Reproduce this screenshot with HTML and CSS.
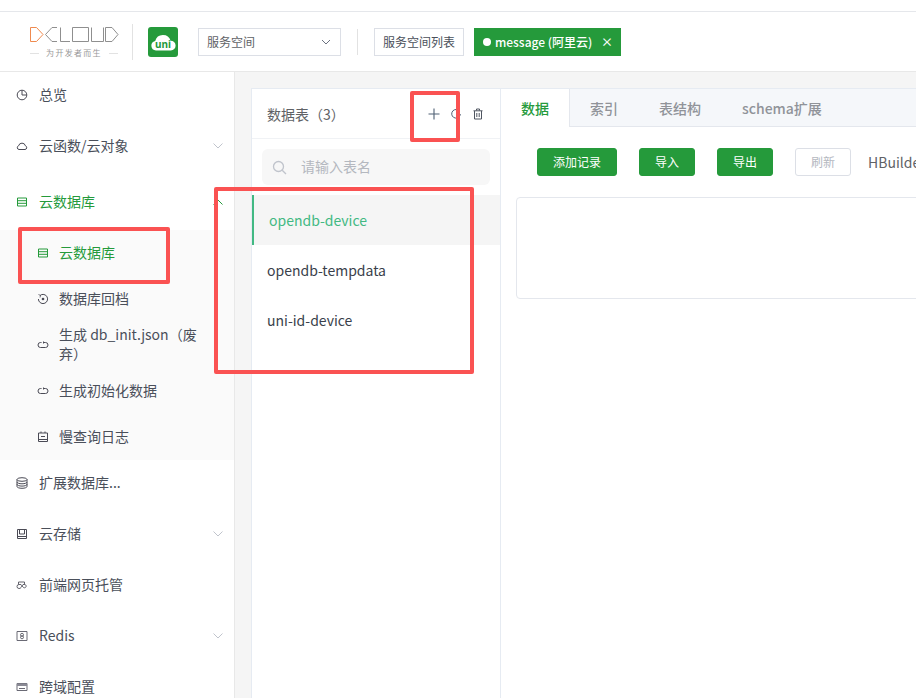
FILE: index.html
```html
<!DOCTYPE html>
<html lang="zh-CN">
<head>
<meta charset="utf-8">
<title>云数据库</title>
<link rel="stylesheet" href="styles.css">
</head>
<body>
<div class="page">
  <div class="top-strip"></div>
  <header class="header">
    <div class="brand">
      <svg class="brand-mark" width="90" height="15" viewBox="0 0 90 15" fill="none">
        <path d="M1.500 .5H7.500L14 7.500L7.500 14.500H1.500Z" stroke="#ef8a4f"/>
        <path d="M28 .5H23L16.500 7.500L23 14.500H28" stroke="#8f8f8f"/>
        <path d="M31.500 .5V14.500H41" stroke="#8f8f8f"/>
        <path d="M43.500 .5H59.500V14.500H43.500Z" stroke="#8f8f8f"/>
        <path d="M62.500 .5V14.500H74.500V.5" stroke="#8f8f8f"/>
        <path d="M76.500 .5H83L89 7.500L83 14.500H76.500Z" stroke="#8f8f8f"/>
      </svg>
      <div class="brand-tag"><i></i><span>为开发者而生</span><i></i></div>
    </div>
    <div class="divider tall"></div>
    <svg class="uni-logo" width="30" height="30" viewBox="0 0 30 30">
      <rect width="30" height="30" rx="3" fill="#259a3b"/>
      <path d="M8 23.500a4.800 4.800 0 0 1-.8-9.500a8 8 0 0 1 15.400-.3a4.900 4.900 0 0 1 .2 9.800Z" fill="#fff"/>
      <text x="15" y="21" text-anchor="middle" class="uni-text">uni</text>
    </svg>
    <div class="select"><span>服务空间</span>
      <svg width="10" height="6" viewBox="0 0 10 6" fill="none"><path d="M1 1L5 5L9 1" stroke="#6b7280"/></svg>
    </div>
    <div class="divider short"></div>
    <div class="space-list">服务空间列表</div>
    <div class="space-tag"><i class="dot"></i><span class="tag-name">message (阿里云)</span><span class="tag-close">×</span></div>
  </header>

  <div class="body">
    <nav class="sidebar">
      <div class="item">
        <svg class="ic" viewBox="0 0 12 12" fill="none"><circle cx="6" cy="6" r="4.800" stroke="#4a4a55"/><path d="M6 1.500V6H10.500" stroke="#4a4a55"/></svg>
        <span>总览</span>
      </div>
      <div class="item">
        <svg class="ic" viewBox="0 0 12 12" fill="none"><path d="M3 9.500a1.900 1.900 0 0 1-.4-3.700a3.500 3.500 0 0 1 6.800 0a1.900 1.900 0 0 1-.4 3.700Z" stroke="#4a4a55"/></svg>
        <span>云函数/云对象</span>
        <svg class="chev" viewBox="0 0 10 6" fill="none"><path d="M.5 .5L5 5L9.500 .5" stroke="#c0c4cc"/></svg>
      </div>
      <div class="item active group-top">
        <svg class="ic" viewBox="0 0 12 12" fill="none"><path d="M1.500 2H10.500V10H1.500ZM1.500 4.700H10.500M1.500 7.300H10.500" stroke="#259a3b"/></svg>
        <span>云数据库</span>
        <svg class="chev" viewBox="0 0 10 6" fill="none"><path d="M.5 5.500L5 1L9.500 5.500" stroke="#259a3b"/></svg>
      </div>
      <div class="sub">
        <div class="sub-item active">
          <svg class="ic" viewBox="0 0 12 12" fill="none"><path d="M1.500 2H10.500V10H1.500ZM1.500 4.700H10.500M1.500 7.300H10.500" stroke="#259a3b"/></svg>
          <span>云数据库</span>
        </div>
        <div class="sub-item">
          <svg class="ic" viewBox="0 0 12 12" fill="none"><path d="M3 2.500A4.600 4.600 0 1 1 1.400 6" stroke="#4a4a55"/><path d="M1.500 1.500L3.500 2.500L3 4.500" stroke="#4a4a55" stroke-width=".8"/><circle cx="6" cy="6" r="1.300" fill="#4a4a55"/></svg>
          <span>数据库回档</span>
        </div>
        <div class="sub-item">
          <svg class="ic" viewBox="0 0 12 12" fill="none"><path d="M4.500 3.500H3.500a2.500 2.500 0 0 0 0 5H8.500a2.500 2.500 0 0 0 0-5H6.500M6.500 2.500V4.500" stroke="#4a4a55"/></svg>
          <span>生成 db_init.json（废弃）</span>
        </div>
        <div class="sub-item">
          <svg class="ic" viewBox="0 0 12 12" fill="none"><path d="M4.500 3.500H3.500a2.500 2.500 0 0 0 0 5H8.500a2.500 2.500 0 0 0 0-5H6.500M6.500 2.500V4.500" stroke="#4a4a55"/></svg>
          <span>生成初始化数据</span>
        </div>
        <div class="sub-item">
          <svg class="ic" viewBox="0 0 12 12" fill="none"><path d="M1.500 2H10.500V10.500H1.500ZM4 5.500H8M1.500 8.500H10.500M4 .5V2M8 .5V2" stroke="#4a4a55"/></svg>
          <span>慢查询日志</span>
        </div>
      </div>
      <div class="item">
        <svg class="ic" viewBox="0 0 12 12" fill="none"><ellipse cx="6" cy="2.500" rx="5" ry="1.800" stroke="#4a4a55"/><path d="M1 2.500V9.500C1 10.500 3.200 11.300 6 11.300S11 10.500 11 9.500V2.500M1 5C1 6 3.200 6.800 6 6.800S11 6 11 5M1 7.300C1 8.300 3.200 9.100 6 9.100S11 8.300 11 7.300" stroke="#4a4a55"/></svg>
        <span>扩展数据库...</span>
      </div>
      <div class="item">
        <svg class="ic" viewBox="0 0 12 12" fill="none"><path d="M1.500 1.500H10.500V10.500H1.500ZM3.500 1.500V6H8.500V1.500M1.500 8.500H10.500" stroke="#4a4a55"/></svg>
        <span>云存储</span>
        <svg class="chev" viewBox="0 0 10 6" fill="none"><path d="M.5 .5L5 5L9.500 .5" stroke="#c0c4cc"/></svg>
      </div>
      <div class="item">
        <svg class="ic" viewBox="0 0 12 12" fill="none"><path d="M2.500 5.500V3H8.500V5M3 9.500a2 2 0 0 1 0-4H5L7 8a1.700 1.700 0 1 0 2-2.500H7L5 8.500a2 2 0 0 1-2 1Z" stroke="#55555f" stroke-width=".9"/></svg>
        <span>前端网页托管</span>
      </div>
      <div class="item">
        <svg class="ic" viewBox="0 0 12 12" fill="none"><path d="M1 1.500H11V10.500H1Z" stroke="#6a6a75"/><circle cx="6" cy="4.800" r="1.500" stroke="#4a4a55" stroke-width=".8"/><circle cx="6" cy="7.300" r="1.500" stroke="#4a4a55" stroke-width=".8"/></svg>
        <span>Redis</span>
        <svg class="chev" viewBox="0 0 10 6" fill="none"><path d="M.5 .5L5 5L9.500 .5" stroke="#c0c4cc"/></svg>
      </div>
      <div class="item">
        <svg class="ic" viewBox="0 0 12 12" fill="none"><path d="M1 2.500H11V9.500H1Z" stroke="#6a6a75"/><path d="M1 2.500H11V5H1Z" fill="#8a8a95"/><path d="M3 7.500H9" stroke="#6a6a75"/></svg>
        <span>跨域配置</span>
      </div>
    </nav>

    <main class="main">
      <section class="tables">
        <div class="tables-head">
          <h2 class="tables-title">数据表（3）</h2>
          <div class="tables-actions">
            <svg width="12" height="12" viewBox="0 0 12 12" fill="none"><path d="M6 .5V11.500M.5 6H11.500" stroke="#4f6075" stroke-width="1.100"/></svg>
            <svg width="12" height="12" viewBox="0 0 12 12" fill="none"><path d="M8 2A4.300 4.300 0 1 0 10.300 6" stroke="#4f6075"/></svg>
            <svg width="12" height="12" viewBox="0 0 12 12" fill="none"><path d="M1.500 2.800H10.500M4.500 2.500V1H7.500V2.500M2.500 3V11H9.500V3M4.800 5V9M7.200 5V9" stroke="#4f5560"/></svg>
          </div>
        </div>
        <div class="search">
          <svg width="15" height="15" viewBox="0 0 15 15" fill="none"><circle cx="6.500" cy="6.500" r="5" stroke="#c0c4cc" stroke-width="1.300"/><path d="M10.200 10.200L14 14" stroke="#c0c4cc" stroke-width="1.300"/></svg>
          <span class="search-text">请输入表名</span>
        </div>
        <ul class="table-list">
          <li class="table-row current">opendb-device</li>
          <li class="table-row">opendb-tempdata</li>
          <li class="table-row">uni-id-device</li>
        </ul>
      </section>

      <section class="detail">
        <div class="tabs">
          <div class="tab current">数据</div>
          <div class="tab">索引</div>
          <div class="tab">表结构</div>
          <div class="tab">schema扩展</div>
        </div>
        <div class="toolbar">
          <button class="btn wide">添加记录</button>
          <button class="btn">导入</button>
          <button class="btn">导出</button>
          <button class="btn ghost">刷新</button>
          <span class="hint">HBuilderX</span>
        </div>
        <div class="editor"></div>
      </section>
    </main>
  </div>

  <div class="mark mark-menu"></div>
  <div class="mark mark-list"></div>
  <div class="mark mark-add"></div>
</div>
</body>
</html>
```

FILE: styles.css
```css
* { box-sizing: border-box; }
html, body { margin: 0; padding: 0; height: 100%; overflow: hidden; }
body { font-family: "Noto Sans CJK SC", "Noto Sans", sans-serif; font-size: 14px; color: #3a3f4b; background: #fff; }
.page { position: relative; width: 916px; height: 698px; overflow: hidden; display: flex; flex-direction: column; }
.top-strip { height: 12px; flex: none; border-bottom: 1px solid #e5e7eb; }

.header { height: 60px; flex: none; display: flex; align-items: center; border-bottom: 1px solid #e8e8e8; padding-left: 29px; }
.brand { width: 90px; display: flex; flex-direction: column; align-items: center; gap: 5px; padding-top: 3px; }
.brand-mark { display: block; }
.brand-tag { display: flex; align-items: center; gap: 7px; font-size: 8px; line-height: 12px; color: #999; letter-spacing: 1.3px; }
.brand-tag i { width: 9px; height: 1px; background: #e2e2e2; }
.divider { width: 1px; background: #e2e2e2; flex: none; }
.divider.tall { height: 36px; margin: 0 15px 0 13px; }
.divider.short { height: 26px; margin: 0 16px; }
.uni-logo { flex: none; }
.uni-text { font: 700 10px "Noto Sans", sans-serif; fill: #259a3b; }
.select { width: 143px; height: 28px; margin-left: 20px; border: 1px solid #dcdfe6; display: flex; align-items: center; justify-content: space-between; padding: 0 9px 0 8px; font-size: 12px; color: #606266; }
.space-list { height: 28px; width: 90px; border: 1px solid #dcdfe6; font-size: 12px; line-height: 26px; text-align: center; color: #4a4f5a; }
.space-tag { height: 28px; width: 147px; margin-left: 10px; background: #259a3b; color: #fff; font-size: 12px; font-weight: 500; display: flex; align-items: center; padding-left: 9px; }
.dot { width: 8px; height: 8px; border-radius: 50%; background: #fff; margin-right: 4px; }
.tag-name { flex: 1; white-space: nowrap; }
.tag-close { width: 28px; text-align: center; font-size: 12px; }

.body { flex: 1; display: flex; min-height: 0; }
.sidebar { width: 235px; flex: none; border-right: 1px solid #e8e8e8; background: #fff; overflow: hidden; }
.item { height: 46px; margin-bottom: 5px; display: flex; align-items: center; padding-left: 17px; position: relative; color: #4a4f5a; }
.group-top { margin-top: 10px; }
.ic { width: 12px; height: 12px; flex: none; margin-right: 10px; margin-left: -1px; }
.item .ic { margin-right: 11px; }
.item span, .sub-item span { margin-top: -2px; }
.chev { position: absolute; right: 11px; top: 20px; width: 10px; height: 6px; }
.item.active, .sub-item.active { color: #259a3b; }
.sub { background: #fafafa; height: 230px; margin-bottom: 0; }
.sub-item { height: 46px; display: flex; align-items: center; padding: 0 30px 0 38px; line-height: 19px; color: #4a4f5a; }

.main { flex: 1; min-width: 0; background: #f5f5f5; display: flex; padding: 16px 0 0 16px; }
.tables { width: 250px; flex: none; background: #fff; border: 1px solid #e6ebf2; border-width: 1px 1px 0 1px; display: flex; flex-direction: column; }
.tables-head { height: 50px; flex: none; border-bottom: 1px solid #f0f2f5; display: flex; align-items: center; justify-content: space-between; padding: 0 16px 0 15px; }
.tables-title { margin: 0; font-size: 14px; font-weight: 400; color: #606266; }
.tables-actions { display: flex; align-items: center; gap: 10px; }
.search { height: 36px; margin: 10px; background: #f7f7f7; border-radius: 6px; display: flex; align-items: center; gap: 14px; padding-left: 10px; color: #b4b8bf; }
.search-text { margin-top: -2px; }
.table-list { list-style: none; margin: 0; padding: 0; }
.table-row { height: 50px; line-height: 50px; padding-left: 15px; color: #3a3f4b; }
.table-row.current { background: #f5f5f5; color: #42b983; border-left: 2px solid #42b983; }

.detail { flex: 1; min-width: 0; background: #fff; border-top: 1px solid #e6ebf2; display: flex; flex-direction: column; }
.tabs { height: 38px; flex: none; display: flex; background: #f5f7fa; border-bottom: 1px solid #e4e7ed; }
.tab { padding: 0 20px; border-right: 1px solid transparent; line-height: 38px; font-weight: 500; color: #909399; white-space: nowrap; }
.tab.current { background: #fff; color: #259a3b; border-right-color: #e4e7ed; height: 38px; }
.toolbar { display: flex; align-items: center; height: 28px; margin: 21px 0 0 36px; white-space: nowrap; }
.btn { height: 28px; width: 56px; margin-right: 22px; border: 1px solid #259a3b; border-radius: 3px; background: #259a3b; color: #fff; font: 12px "Noto Sans CJK SC", sans-serif; padding: 0 0 2px; flex: none; }
.btn.wide { width: 80px; }
.btn.ghost { background: #fff; border-color: #dcdfe6; color: #b4b8bf; margin-right: 17px; }
.hint { font-size: 14px; color: #606266; }
.editor { margin: 21px -20px 0 15px; height: 102px; border: 1px solid #e4e7ed; border-radius: 4px; }

.mark { position: absolute; border: 4px solid #fa5252; border-radius: 2px; }
.mark-menu { left: 18px; top: 227px; width: 152px; height: 57px; }
.mark-list { left: 214px; top: 187px; width: 260px; height: 187px; }
.mark-add { left: 410px; top: 91px; width: 50px; height: 51px; }
```
